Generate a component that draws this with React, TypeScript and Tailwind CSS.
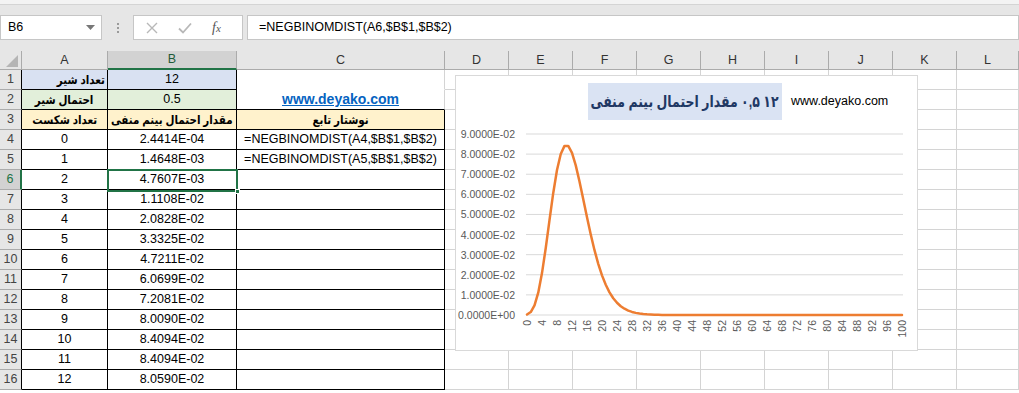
// Excel-style sheet: negative binomial table + chart

import React from 'react';

const COLS = ['A', 'B', 'C', 'D', 'E', 'F', 'G', 'H', 'I', 'J', 'K', 'L'];

// NEGBINOMDIST(k, 12, 0.5) for k = 0..100
const probs: number[] = [];
let p = Math.pow(0.5, 12);
for (let k = 0; k <= 100; k++) {
  probs.push(p);
  p = (p * (k + 12)) / (k + 1) * 0.5;
}

const fmt = (v: number) => {
  const [m, e] = v.toExponential(4).split('e');
  const n = parseInt(e, 10);
  return `${m}E${n < 0 ? '-' : '+'}${String(Math.abs(n)).padStart(2, '0')}`;
};

const grid = 'grid grid-cols-[22px_86px_129px_208px_64px_64px_64px_64px_64px_64px_64px_64px_1fr]';

type Cell = { text?: string; bold?: boolean; rtl?: boolean; align?: string; link?: boolean };

const rowData = (r: number): Cell[] => {
  if (r === 1) return [{ text: 'تعداد شیر', bold: true, rtl: true, align: 'right' }, { text: '12' }, {}];
  if (r === 2) return [{ text: 'احتمال شیر', bold: true, rtl: true }, { text: '0.5' }, { text: 'www.deyako.com', link: true }];
  if (r === 3)
    return [
      { text: 'تعداد شکست', bold: true, rtl: true },
      { text: 'مقدار احتمال بینم منفی', bold: true, rtl: true },
      { text: 'نوشتار تابع', bold: true, rtl: true },
    ];
  const k = r - 4;
  const c = r === 4 || r === 5 ? `=NEGBINOMDIST(A${r},$B$1,$B$2)` : undefined;
  return [{ text: String(k) }, { text: fmt(probs[k]) }, { text: c }];
};

const fillFor = (r: number, col: number) => {
  if (r === 1 && col < 2) return 'bg-[#d9e1f2]';
  if (r === 2 && col < 2) return 'bg-[#e2efda]';
  if (r === 3) return 'bg-[#fff2cc]';
  return 'bg-white';
};

const borderFor = (r: number, col: number) => {
  if (col < 2) return 'border-r border-b border-black';
  if (r === 1) return 'border-r border-b border-r-[#d4d4d4] border-b-white';
  if (r === 2) return 'border-r border-b border-r-[#d4d4d4] border-b-black';
  return 'border-r border-b border-black';
};

const SheetRow = ({ r }: { r: number }) => {
  const cells = rowData(r);
  const sel = r === 6;
  return (
    <>
      <div
        className={
          sel
            ? 'h-[20px] flex items-center justify-center bg-[#d2d2d2] text-[#217346] border-r-2 border-b border-r-[#217346] border-b-[#ababab]'
            : 'h-[20px] flex items-center justify-center bg-[#e6e6e6] text-[#444] border-r border-b border-r-black border-b-[#ababab]'
        }
      >
        {r}
      </div>
      {cells.map((c, i) => (
        <div
          key={i}
          dir={c.rtl ? 'rtl' : undefined}
          className={`h-[20px] flex items-center overflow-visible whitespace-nowrap ${fillFor(r, i)} ${borderFor(r, i)} ${
            c.align === 'right' ? 'justify-start pr-[2px]' : 'justify-center'
          }`}
        >
          {c.link ? (
            <span className="font-bold text-[14px] text-[#0563c1] underline">{c.text}</span>
          ) : c.bold ? (
            <span
              className={`inline-block font-bold text-[12px] text-black scale-x-[0.86] ${
                c.align === 'right' ? 'origin-right' : 'origin-center'
              }`}
            >
              {c.text}
            </span>
          ) : (
            <span className="text-black">{c.text}</span>
          )}
        </div>
      ))}
      {COLS.slice(3).map((c) => (
        <div key={c} className="h-[20px] bg-white border-r border-b border-[#d4d4d4]" />
      ))}
    </>
  );
};

const Chart = () => {
  const X = (k: number) => 71 + k * 3.75;
  const Y = (v: number) => 239 - (v / 0.09) * 181;
  const pts = probs.map((v, k) => `${X(k).toFixed(2)},${Y(v).toFixed(2)}`).join(' ');
  return (
    <div className="absolute left-[455px] top-[75px] w-[463px] h-[276px] bg-white border border-[#d9d9d9]">
      <svg className="absolute inset-0" width="461" height="274" viewBox="0 0 461 274">
        {Array.from({ length: 10 }, (_, i) => (
          <g key={i}>
            <line x1="70" x2="447" y1={Y(i * 0.01)} y2={Y(i * 0.01)} stroke="#d9d9d9" strokeWidth="1" />
            <text x="59" y={Y(i * 0.01) + 4} textAnchor="end" fontSize="10.5" fill="#595959">
              {fmt(i * 0.01)}
            </text>
          </g>
        ))}
        {Array.from({ length: 26 }, (_, i) => (
          <text
            key={i}
            transform={`translate(${X(i * 4) + 4} 244) rotate(-90)`}
            textAnchor="end"
            fontSize="10.5"
            fill="#595959"
          >
            {i * 4}
          </text>
        ))}
        <polyline points={pts} fill="none" stroke="#ed7d31" strokeWidth="2.5" strokeLinejoin="round" strokeLinecap="round" />
      </svg>
      <div className="relative flex items-center ml-[132px] mt-[7px]">
        <div className="w-[194px] h-[37px] flex items-center justify-center bg-[#dae3f3] overflow-hidden">
          <span
            dir="rtl"
            className="inline-block scale-x-[0.78] text-[#1f3864] font-bold text-[16px] whitespace-nowrap"
          >
            ۱۲ ۰,۵ مقدار احتمال بینم منفی
          </span>
        </div>
        <span className="ml-[9px] text-[12.5px] text-black">www.deyako.com</span>
      </div>
    </div>
  );
};

export default function App() {
  return (
    <div className="relative w-[1019px] h-[393px] overflow-hidden bg-white font-['Liberation_Sans','DejaVu_Sans',sans-serif] text-[12.5px] text-[#222]">
      {/* ribbon edge */}
      <div className="h-[5px] bg-[#f3f3f3] border-b border-[#d4d4d4]" />
      <div className="h-[10px] bg-[#e6e6e6]" />

      {/* formula bar */}
      <div className="h-[25px] flex bg-[#e6e6e6]">
        <div className="w-[102px] h-full bg-white border border-[#c6c6c6] flex items-center justify-between pl-[7px] pr-[6px]">
          <span className="text-black">B6</span>
          <svg width="9" height="5" viewBox="0 0 9 5">
            <path d="M0 0 H9 L4.5 5 Z" fill="#777" />
          </svg>
        </div>
        <div className="w-[31px] flex flex-col items-center justify-center gap-[2px]">
          <div className="w-[2px] h-[2px] bg-[#9a9a9a]" />
          <div className="w-[2px] h-[2px] bg-[#9a9a9a]" />
          <div className="w-[2px] h-[2px] bg-[#9a9a9a]" />
        </div>
        <div className="w-[110px] h-full bg-white border border-[#c6c6c6] flex items-center pl-[12px] gap-[20px]">
          <svg width="12" height="12" viewBox="0 0 12 12">
            <path d="M1 1 L11 11 M11 1 L1 11" stroke="#b8b8b8" strokeWidth="1.4" />
          </svg>
          <svg width="14" height="12" viewBox="0 0 14 12">
            <path d="M1 6.5 L5 10.5 L13 1.5" stroke="#b8b8b8" strokeWidth="1.8" fill="none" />
          </svg>
          <span className="font-['Liberation_Serif',serif] italic text-[14px] text-[#555] leading-none">
            f<span className="text-[11px]">x</span>
          </span>
        </div>
        <div className="w-[4px]" />
        <div className="flex-1 h-full bg-white border border-[#c6c6c6] flex items-center pl-[11px] text-black">
          =NEGBINOMDIST(A6,$B$1,$B$2)
        </div>
      </div>
      <div className="h-[11px] bg-[#e6e6e6]" />

      {/* column headers */}
      <div className={grid}>
        <div className="h-[19px] bg-[#e6e6e6] border-r border-b border-[#ababab] flex items-end justify-end pr-[3px] pb-[2px]">
          <svg width="12" height="12" viewBox="0 0 12 12">
            <path d="M12 0 V12 H0 Z" fill="#b5b5b5" />
          </svg>
        </div>
        {COLS.map((c) =>
          c === 'B' ? (
            <div key={c} className="h-[19px] flex items-center justify-center bg-[#d2d2d2] text-[#1e5b38] border-r border-b-2 border-r-[#ababab] border-b-[#217346]">
              {c}
            </div>
          ) : (
            <div key={c} className="h-[19px] flex items-center justify-center bg-[#e6e6e6] text-[#333] border-r border-b border-[#ababab]">
              {c}
            </div>
          )
        )}
      </div>

      {/* sheet */}
      <div className={grid}>
        {Array.from({ length: 16 }, (_, i) => (
          <SheetRow key={i} r={i + 1} />
        ))}
      </div>

      {/* active cell B6 */}
      <div className="absolute left-[107px] top-[169px] w-[131px] h-[23px] border-2 border-[#217346]" />
      <div className="absolute left-[235px] top-[189px] w-[5px] h-[5px] bg-[#217346] border border-white" />

      <Chart />
    </div>
  );
}
